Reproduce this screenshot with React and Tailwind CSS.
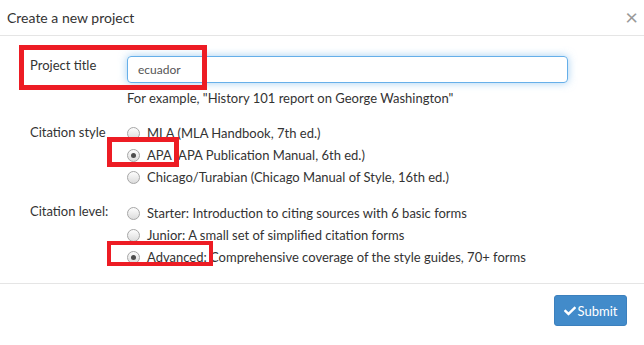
import { FaCheck } from 'react-icons/fa';

const Radio = ({ checked, children }) => (
  <label className="flex items-center h-[22px]">
    <span className="w-[13px] h-[13px] rounded-full border border-[#a6a6a6] bg-gradient-to-b from-[#fdfdfd] to-[#dcdcdc] flex items-center justify-center shrink-0">
      {checked && <span className="w-[5px] h-[5px] rounded-full bg-[#4d4d4d]" />}
    </span>
    <span className="ml-[7px]">{children}</span>
  </label>
);

const App = () => {
  return (
    <div className="relative w-[644px] h-[345px] bg-white text-[13px] leading-[18px] text-[#333] font-['Lato',_'Open_Sans',sans-serif]">
      {/* Header */}
      <div className="h-[36px] border-b border-[#e5e5e5] flex items-center justify-between pl-[7px] pr-[6px]">
        <h4 className="text-[14px] text-[#333]">Create a new project</h4>
        <button className="text-[22px] leading-none text-[#999] -mt-[2px]">×</button>
      </div>

      {/* Body */}
      <div className="pt-[20px]">
        <div className="flex">
          <div className="w-[127px] pl-[30px] shrink-0">Project title</div>
          <div>
            <div className="w-[441px] h-[27px] rounded-[4px] border border-[#66afe9] shadow-[0_0_8px_rgba(102,175,233,0.6)] flex items-center pl-[10px] text-[12px] text-[#555]">
              ecuador
            </div>
            <p className="mt-[6px]">For example, "History 101 report on George Washington"</p>
          </div>
        </div>

        <div className="flex mt-[15px]">
          <div className="w-[127px] pl-[30px] shrink-0 pt-[1px]">Citation style</div>
          <div>
            <Radio>MLA (MLA Handbook, 7th ed.)</Radio>
            <Radio checked>APA (APA Publication Manual, 6th ed.)</Radio>
            <Radio>Chicago/Turabian (Chicago Manual of Style, 16th ed.)</Radio>
          </div>
        </div>

        <div className="flex mt-[14px]">
          <div className="w-[127px] pl-[30px] shrink-0">Citation level:</div>
          <div>
            <Radio>Starter: Introduction to citing sources with 6 basic forms</Radio>
            <Radio>Junior: A small set of simplified citation forms</Radio>
            <Radio checked>Advanced: Comprehensive coverage of the style guides, 70+ forms</Radio>
          </div>
        </div>
      </div>

      {/* Footer */}
      <div className="mt-[15px] border-t border-[#e5e5e5] pt-[11px] pr-[17px] flex justify-end">
        <button className="h-[31px] w-[73px] rounded-[3px] bg-[#428bca] border border-[#3c80bd] text-white text-[13px] flex items-center justify-center gap-[2px]">
          <FaCheck className="w-[12px] h-[12px]" />
          Submit
        </button>
      </div>

      {/* Annotation boxes */}
      <div className="absolute left-[19px] top-[45px] w-[188px] h-[45px] border-[5px] border-[#ed1c24]" />
      <div className="absolute left-[107px] top-[137px] w-[72px] h-[30px] border-[5px] border-[#ed1c24]" />
      <div className="absolute left-[107px] top-[241px] w-[106px] h-[25px] border-[4px] border-[#ed1c24]" />
    </div>
  );
};

export default App;
